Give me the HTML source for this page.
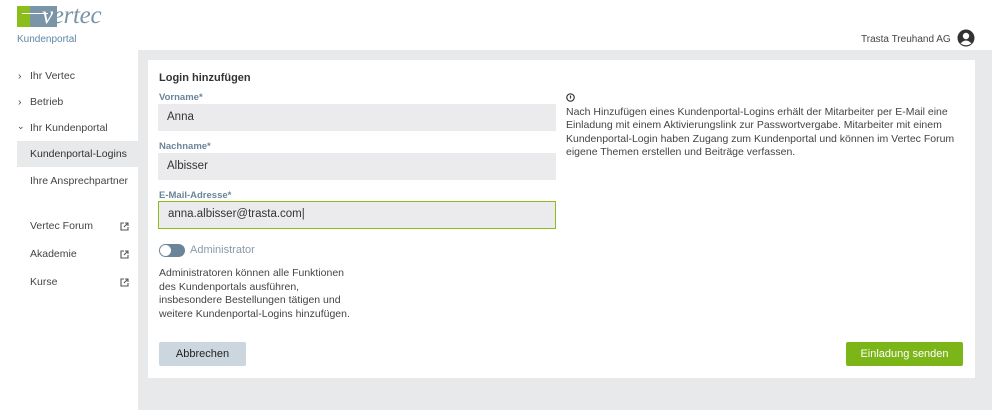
<!DOCTYPE html>
<html><head><meta charset="utf-8"><style>
*{margin:0;padding:0;box-sizing:border-box}
body{width:992px;height:410px;background:#fff;font-family:"Liberation Sans",sans-serif;color:#444;position:relative;overflow:hidden;font-size:11px}
.a{position:absolute}
.nav{left:30px;font-size:10.5px;color:#444}
.lbl{left:159px;font-size:9.5px;font-weight:bold;color:#6a8599}
.inp{left:158px;width:398px;height:27px;background:#ebebed;font-size:11.5px;color:#333;padding:7px 0 0 9px}
.ext{left:120px;width:9px;height:9px}
</style></head><body>
<div class="a" style="left:17px;top:6px;width:13px;height:21px;background:#8cbd1c"></div>
<div class="a" style="left:30px;top:6px;width:27px;height:21px;background:#7a95a8"></div>
<div class="a" style="left:22px;top:13px;width:26px;height:1px;background:#fff"></div>
<div class="a" style="left:42px;top:5px;font-size:25px;line-height:22px;font-style:italic;color:#7a95a8;font-family:'Liberation Serif',serif;letter-spacing:-0.3px"><span style="color:#fff">v</span>ertec</div>
<div class="a" style="left:17px;top:34px;font-size:10px;color:#5c87a8">Kundenportal</div>
<div class="a" style="left:861px;top:34px;font-size:10px;color:#444">Trasta Treuhand AG</div>
<svg class="a" style="left:957px;top:29px" width="18" height="18" viewBox="0 0 18 18"><circle cx="9" cy="9" r="8.5" fill="#333"/><circle cx="9" cy="7" r="3.2" fill="#fff"/><path d="M3.5 14.5 Q9 8.5 14.5 14.5 Q9 18 3.5 14.5Z" fill="#fff"/></svg>
<div class="a" style="left:138px;top:50px;width:854px;height:360px;background:#e8e9eb"></div>
<div class="a" style="left:148px;top:60px;width:827px;height:318px;background:#fff"></div>
<div class="a nav" style="left:18px;top:70px">›</div><div class="a nav" style="top:70px">Ihr Vertec</div>
<div class="a nav" style="left:18px;top:96px">›</div><div class="a nav" style="top:96px">Betrieb</div>
<div class="a nav" style="left:17px;top:121px;font-size:9px">⌄</div><div class="a nav" style="top:122px">Ihr Kundenportal</div>
<div class="a" style="left:17px;top:141px;width:121px;height:26px;background:#e8e9eb"></div>
<div class="a nav" style="top:148px;color:#333">Kundenportal-Logins</div>
<div class="a nav" style="top:175px">Ihre Ansprechpartner</div>
<div class="a nav" style="top:220px">Vertec Forum</div>
<div class="a nav" style="top:248px">Akademie</div>
<div class="a nav" style="top:276px">Kurse</div>
<svg class="a ext" style="top:222px" viewBox="0 0 9 9"><path d="M4 1H1v7h7V5M5 1h3v3M8 1 4 5" stroke="#555" fill="none" stroke-width="1.1"/></svg>
<svg class="a ext" style="top:250px" viewBox="0 0 9 9"><path d="M4 1H1v7h7V5M5 1h3v3M8 1 4 5" stroke="#555" fill="none" stroke-width="1.1"/></svg>
<svg class="a ext" style="top:278px" viewBox="0 0 9 9"><path d="M4 1H1v7h7V5M5 1h3v3M8 1 4 5" stroke="#555" fill="none" stroke-width="1.1"/></svg>
<div class="a" style="left:159px;top:72px;font-size:11px;font-weight:bold;color:#333">Login hinzufügen</div>
<div class="a lbl" style="top:92px">Vorname*</div>
<div class="a inp" style="top:104px">Anna</div>
<div class="a lbl" style="top:141px">Nachname*</div>
<div class="a inp" style="top:153px">Albisser</div>
<div class="a lbl" style="top:190px">E-Mail-Adresse*</div>
<div class="a inp" style="top:201px;height:28px;border:1.5px solid #8cbd1c;padding-top:6px">anna.albisser@trasta.com|</div>
<div class="a" style="left:159px;top:244px;width:26px;height:13px;border-radius:7px;background:#6a8599"></div>
<div class="a" style="left:160px;top:245px;width:11px;height:11px;border-radius:6px;background:#fff"></div>
<div class="a" style="left:190px;top:244px;font-size:11px;color:#8a9aa8">Administrator</div>
<div class="a" style="left:159px;top:267px;font-size:10.5px;line-height:13.5px;color:#444">Administratoren können alle Funktionen<br>des Kundenportals ausführen,<br>insbesondere Bestellungen tätigen und<br>weitere Kundenportal-Logins hinzufügen.</div>
<div class="a" style="left:159px;top:342px;width:87px;height:24px;background:#ccd6de;border-radius:2px;font-size:11px;color:#222;text-align:center;line-height:24px">Abbrechen</div>
<div class="a" style="left:846px;top:342px;width:117px;height:24px;background:#7cb518;border-radius:2px;font-size:11px;color:#fff;text-align:center;line-height:24px">Einladung senden</div>
<svg class="a" style="left:566px;top:93px" width="9" height="9" viewBox="0 0 9 9"><circle cx="4.5" cy="4.5" r="3.7" stroke="#333" fill="none" stroke-width="1.2"/><path d="M4.5 2.5v3" stroke="#333" stroke-width="1.2"/></svg>
<div class="a" style="left:566px;top:106px;font-size:10.5px;line-height:13.3px;color:#444;width:400px">Nach Hinzufügen eines Kundenportal-Logins erhält der Mitarbeiter per E-Mail eine<br>Einladung mit einem Aktivierungslink zur Passwortvergabe. Mitarbeiter mit einem<br>Kundenportal-Login haben Zugang zum Kundenportal und können im Vertec Forum<br>eigene Themen erstellen und Beiträge verfassen.</div>
</body></html>
